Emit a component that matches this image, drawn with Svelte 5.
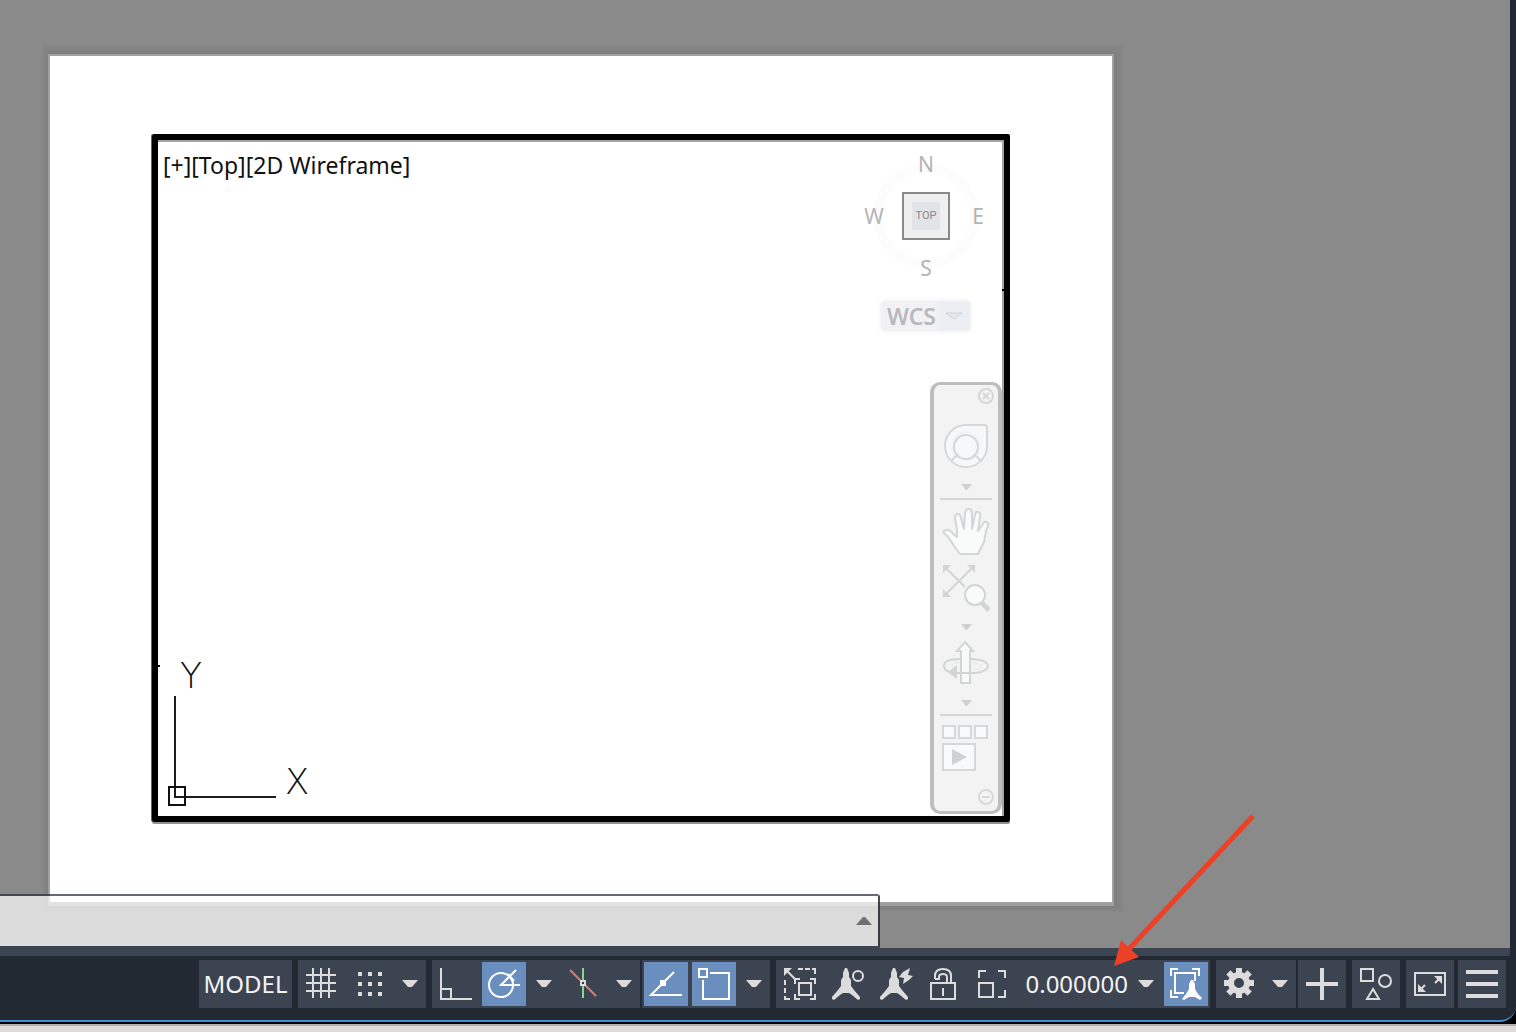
<script lang="ts">
    const annoBody = '21,8 23,8 25,13 25,17 27,20 27,26 30,30 36,37 36,39 34,40 28,35 25,33 19,33 16,35 10,40 8,39 8,37 14,30 17,26 17,20 19,17 19,13';
    const teeth = [0, 45, 90, 135, 180, 225, 270, 315];

    let command = $state('');
    let active = $state({ polar: true, track: true, osnap: true, annotation: true });

    function toggle(key: keyof typeof active) {
        active[key] = !active[key];
    }
</script>

{#snippet more(label: string)}
    <button class="more" aria-label={label}>
        <svg width="32" height="48" viewBox="0 0 32 48"><polygon points="8,20 24,20 18,27 14,27" fill="#dcdcdc" /></svg>
    </button>
{/snippet}

{#snippet navMore(label: string)}
    <button class="nav-more" aria-label={label}>
        <svg width="12" height="6" viewBox="0 0 12 6"><polygon points="1,0 12,0 7,6 6,6" fill="#cfd0d1" /></svg>
    </button>
{/snippet}

<div class="screen">
    <div class="window">
        <main class="canvas">
            <section class="sheet">
                <div class="viewport">
                    <button class="view-label">[+][Top][2D Wireframe]</button>

                    <div class="compass">
                        <svg class="ring" width="106" height="106" viewBox="0 0 106 106">
                            <circle cx="53" cy="53" r="48" fill="none" stroke="#fcfcfc" stroke-width="9" />
                        </svg>
                        <button class="north">N</button>
                        <button class="west">W</button>
                        <button class="cube"><span>TOP</span></button>
                        <button class="east">E</button>
                        <button class="south">S</button>
                    </div>

                    <button class="wcs">
                        WCS
                        <svg width="20" height="10" viewBox="0 0 20 10"><path d="M2 2H18L10 8Z" fill="#e6e8ec" stroke="#d0d2d6" stroke-width="1" /></svg>
                    </button>

                    <nav class="navbar">
                        <button class="nav-end" aria-label="Close">
                            <svg width="16" height="16" viewBox="0 0 16 16" fill="none" stroke="#d6d6d6" stroke-width="2">
                                <circle cx="8" cy="8" r="7" />
                                <path d="M5 5L11 11M11 5L5 11" />
                            </svg>
                        </button>
                        <button class="nav-tool wheel" aria-label="Steering wheel">
                            <svg width="48" height="48" viewBox="0 0 48 48" fill="#f7f8f9" stroke="#d6d7d8" stroke-width="2">
                                <path d="M24 3H42Q45 3 45 6V24A21 21 0 1 1 24 3Z" />
                                <circle cx="24" cy="24" r="15" fill="#f3f4f5" stroke="none" />
                                <circle cx="24" cy="25" r="12" />
                                <path d="M15 33L9 39M33 33L39 39" />
                            </svg>
                        </button>
                        {@render navMore('Wheel options')}
                        <hr />
                        <button class="nav-tool" aria-label="Pan">
                            <svg width="48" height="48" viewBox="0 0 48 48">
                                <path
                                    d="M18 46L12 38L7 30L2 25Q1 22 5 22Q9 22 11 26L15 29V22L13 10Q13 6 16 6Q18 6 19 10L22 21L23 5Q24 1 27 1Q30 1 30 6V21L33 7Q34 3 36 4Q39 4 38 9L36 23L41 16Q43 12 46 15Q47 17 44 23L42 34L36 46Z"
                                    fill="#f9fafa" stroke="#d3d5d6" stroke-width="2" stroke-linejoin="round" />
                            </svg>
                        </button>
                        <button class="nav-tool zoom" aria-label="Zoom extents">
                            <svg width="48" height="48" viewBox="0 0 48 48" fill="none" stroke="#d3d4d5" stroke-width="2">
                                <path d="M3 3L19 19M31 3L3 31M15 15L23 23" />
                                <path d="M1 1H9L1 9ZM33 1V9L25 1ZM1 33V25L9 33Z" fill="#d3d4d5" stroke="none" />
                                <path d="M40 39L47 46" stroke-width="5" />
                                <circle cx="33" cy="31" r="10" fill="#f9fafa" />
                            </svg>
                        </button>
                        {@render navMore('Zoom options')}
                        <button class="nav-tool orbit" aria-label="Orbit">
                            <svg width="48" height="48" viewBox="0 0 48 48" fill="none" stroke="#d3d4d5" stroke-width="2">
                                <path d="M8 32Q2 30 2 26Q2 19 18 19M29 19Q46 20 46 26Q46 31 34 33H14" />
                                <path d="M14 28Q6 26 14 23L18 22M29 22Q40 24 40 27Q40 29 30 30" stroke="#e6e7e8" stroke-width="1" />
                                <path d="M19 43V11H15L23 2L31 11H28V43Z" fill="#f8f9f9" />
                                <path d="M14 33H34" />
                                <path d="M6 32L15 25V39Z" fill="#d3d4d5" stroke="none" />
                            </svg>
                        </button>
                        {@render navMore('Orbit options')}
                        <hr />
                        <button class="nav-tool" aria-label="Show motion">
                            <svg width="48" height="48" viewBox="0 0 48 48" fill="#f8f9fa" stroke="#d6d7d8" stroke-width="2">
                                <rect x="1" y="2" width="12" height="12" />
                                <rect x="17" y="2" width="12" height="12" />
                                <rect x="33" y="2" width="12" height="12" />
                                <rect x="1" y="20" width="32" height="26" />
                                <path d="M10 25L25 33L10 41Z" fill="#cfd1d2" stroke="none" />
                            </svg>
                        </button>
                        <button class="nav-end bottom" aria-label="Customize">
                            <svg width="16" height="16" viewBox="0 0 16 16" fill="none" stroke="#d9d9d9" stroke-width="2">
                                <circle cx="8" cy="8" r="7" />
                                <path d="M4 8H12" />
                            </svg>
                        </button>
                    </nav>

                    <svg class="ucs" width="156" height="156" viewBox="0 0 156 156" fill="none" stroke="#111" stroke-width="2">
                        <path d="M13 44V145H114" stroke="#1c1c1c" />
                        <rect x="7" y="135" width="16" height="18" />
                        <text class="axis" x="29" y="36" text-anchor="middle">Y</text>
                        <text class="axis" x="135" y="142" text-anchor="middle">X</text>
                    </svg>
                </div>
            </section>

            <form class="command">
                <input aria-label="Command" bind:value={command} />
                <button type="button" aria-label="Command history">
                    <svg width="16" height="8" viewBox="0 0 16 8"><polygon points="0,8 16,8 9,0 7,0" fill="#707070" /></svg>
                </button>
            </form>
        </main>

        <footer class="status">
            <div class="group"><button class="label">MODEL</button></div>

            <div class="group">
                <button aria-label="Grid">
                    <svg viewBox="0 0 48 48"><path d="M15 8V38M23 8V38M31 8V38M8 15H38M8 23H38M8 31H38" /></svg>
                </button>
                <button aria-label="Snap">
                    <svg viewBox="0 0 48 48"><path d="M12 14H36M12 24H36M12 34H36" stroke-width="4" stroke-dasharray="4 6" /></svg>
                </button>
                {@render more('Snap settings')}
            </div>

            <div class="cluster">
                <div class="group">
                    <button aria-label="Ortho">
                        <svg viewBox="0 0 48 48"><path d="M9 8V39H40M9 29H19V39" /></svg>
                    </button>
                    <button class="toggle" class:on={active.polar} aria-label="Polar tracking" onclick={() => toggle('polar')}>
                        <svg viewBox="0 0 48 48">
                            <circle cx="21" cy="25" r="12" />
                            <path d="M40 25H21L36 10M28 14L34 21" />
                        </svg>
                    </button>
                    {@render more('Polar settings')}
                    <button aria-label="Isometric drafting">
                        <svg viewBox="0 0 48 48">
                            <path d="M10 10L36 36" stroke="#e07a78" />
                            <path d="M23 8V38" stroke="#86d58e" />
                            <rect x="21" y="21" width="4" height="4" fill="#333a44" />
                        </svg>
                    </button>
                    {@render more('Isoplanes')}
                </div>
                <div class="group">
                    <button class="toggle" class:on={active.track} aria-label="Snap tracking" onclick={() => toggle('track')}>
                        <svg viewBox="0 0 48 48">
                            <path d="M32 12L9 35H40" />
                            <rect x="18" y="20" width="6" height="6" fill="#fff" stroke="none" />
                        </svg>
                    </button>
                    <button class="toggle" class:on={active.osnap} aria-label="Object snap" onclick={() => toggle('osnap')}>
                        <svg viewBox="0 0 48 48">
                            <rect x="9" y="9" width="8" height="8" />
                            <path d="M20 13H39V39H13V20" />
                        </svg>
                    </button>
                    {@render more('Object snap settings')}
                </div>
            </div>

            <div class="group">
                <button aria-label="Selection cycling">
                    <svg viewBox="0 0 48 48">
                        <path d="M22 9H27M29 9H34M36 9H39V14M9 20V25M9 28V33M9 36V39H14M10 10L19 19" />
                        <polygon points="8,8 16,8 8,16" fill="#dcdcdc" stroke="none" />
                        <path d="M19 24V19H24M34 19H39V24M39 34V39H34M24 39H19V34" />
                        <rect x="23" y="23" width="12" height="12" />
                    </svg>
                </button>
                <button aria-label="Annotation visibility">
                    <svg viewBox="0 0 48 48">
                        <polygon points={annoBody} fill="#dcdcdc" stroke="none" />
                        <circle cx="34" cy="16" r="5" />
                    </svg>
                </button>
                <button aria-label="Add scales automatically">
                    <svg viewBox="0 0 48 48">
                        <polygon points={annoBody} fill="#dcdcdc" stroke="none" />
                        <path d="M38 8L31 12L27 17L32 18L31 24L37 20L41 16L36 15Z" fill="#dcdcdc" stroke="none" />
                    </svg>
                </button>
                <button aria-label="Viewport lock">
                    <svg viewBox="0 0 48 48">
                        <rect x="11" y="23" width="24" height="16" />
                        <path d="M23 28V36M15 19V16Q15 9 23 9Q31 9 31 16V22M15 19H19V17Q19 14 23 14Q27 14 27 17V22" />
                    </svg>
                </button>
                <button aria-label="Viewport scale sync">
                    <svg viewBox="0 0 48 48">
                        <rect x="11" y="23" width="14" height="14" />
                        <path d="M11 18V11H18M30 11H37V18M37 30V37H30" />
                    </svg>
                </button>
                <button class="label scale">0.000000</button>
                {@render more('Viewport scales')}
                <button class="toggle" class:on={active.annotation} aria-label="Annotation scale" onclick={() => toggle('annotation')}>
                    <svg viewBox="0 0 48 48">
                        <path d="M9 16V9H16M30 9H37V16M9 30V37H16M22 33H13V13H33V21" />
                        <polygon points="29,20 31,20 33,24 33,29 36,34 40,38 38,40 33,37 27,37 22,40 20,39 24,34 27,29 27,24" fill="#fff" stroke="none" />
                    </svg>
                </button>
            </div>

            <div class="cluster">
                <div class="group">
                    <button aria-label="Workspace">
                        <svg viewBox="0 0 48 48">
                            <circle cx="23" cy="23" r="8" stroke-width="6" />
                            {#each teeth as angle}
                                <rect x="20" y="8" width="6" height="6" fill="#dcdcdc" stroke="none" transform="rotate({angle} 23 23)" />
                            {/each}
                        </svg>
                    </button>
                    {@render more('Workspaces')}
                </div>
                <div class="group">
                    <button aria-label="Annotation monitor">
                        <svg viewBox="0 0 48 48"><path d="M24 8V40M8 24H40" stroke-width="4" /></svg>
                    </button>
                </div>
            </div>

            <div class="group">
                <button aria-label="Isolate objects">
                    <svg viewBox="0 0 48 48">
                        <rect x="9" y="9" width="12" height="12" />
                        <circle cx="33" cy="21" r="6" />
                        <path d="M21 29L15 39H27Z" />
                    </svg>
                </button>
            </div>

            <div class="cluster wide">
                <div class="group">
                    <button aria-label="Clean screen">
                        <svg viewBox="0 0 48 48">
                            <rect x="9" y="13" width="30" height="22" />
                            <path d="M29 23L34 18M19 25L14 30" />
                            <path d="M28 16H36V24ZM12 24V32H20Z" fill="#dcdcdc" stroke="none" />
                        </svg>
                    </button>
                </div>
                <div class="group">
                    <button aria-label="Customization">
                        <svg viewBox="0 0 48 48"><path d="M8 12H40M8 24H40M8 36H40" stroke-width="4" /></svg>
                    </button>
                </div>
            </div>
        </footer>
    </div>
    <div class="desktop"></div>

    <svg class="pointer" width="144" height="154" viewBox="0 0 144 154">
        <path d="M141 3L16 137" stroke="#ec4127" stroke-width="5" />
        <polygon points="2,153 9,127 27,144" fill="#ec4127" />
    </svg>
</div>

<style>
    :global(body) { margin: 0; }

    .screen {
        position: relative;
        display: flex;
        flex-direction: column;
        min-height: 100vh;
        background: #000;
        font-family: "Noto Sans", sans-serif;
    }
    button {
        padding: 0;
        border: none;
        background: none;
        font: inherit;
        color: inherit;
        cursor: pointer;
    }
    svg { display: block; }

    .window {
        flex: 1;
        display: flex;
        flex-direction: column;
        background: #222933;
        border-bottom: 2px solid #3d8fd1;
        border-bottom-right-radius: 16px;
    }
    .desktop {
        height: 6px;
        margin-top: 2px;
        border-top: 2px solid #b2b1b0;
        background: #dcdbda;
    }

    /* drawing area */
    .canvas {
        position: relative;
        flex: 1;
        display: flex;
        box-sizing: border-box;
        margin-right: 6px;
        padding: 54px 396px 42px 48px;
        background: #8a8a8a;
        border-bottom: 8px solid #3d4451;
    }
    .sheet {
        flex: 1;
        display: flex;
        padding: 78px 102px 80px;
        background: #fff;
        border: 2px solid #a0a0a0;
        border-bottom-width: 4px;
        box-shadow: 2px -2px 2px 7px rgba(0, 0, 0, 0.04), 1px 0 4px 2px rgba(0, 0, 0, 0.05);
    }
    .viewport {
        position: relative;
        flex: 1;
        border: 6px solid #000;
        border-radius: 2px;
        box-shadow: inset -2px 2px 0 #a3a3a3, 0 2px 0 #939393, -1px 0 0 #666;
    }
    .viewport::before,
    .viewport::after {
        content: "";
        position: absolute;
        width: 2px;
        height: 2px;
        background: #000;
    }
    .viewport::before { left: 0; bottom: 22%; }
    .viewport::after { right: 0; top: 22%; }
    .view-label {
        margin: 9px 5px;
        font-size: 23px;
        line-height: 32px;
        color: #111;
    }
    .ucs {
        position: absolute;
        left: 4px;
        bottom: 8px;
    }
    .axis {
        font-family: "DejaVu Sans Light", "DejaVu Sans", sans-serif;
        font-size: 36px;
        font-weight: 200;
        fill: #111;
        stroke: none;
    }

    .compass {
        position: absolute;
        top: 10px;
        right: 12px;
        display: grid;
        grid-template: 28px 76px 28px / 28px 76px 28px;
        place-items: center;
        font-size: 21px;
        line-height: 24px;
        color: #b4b4b4;
    }
    .ring {
        position: absolute;
        top: 13px;
        left: 13px;
    }
    .north, .cube, .south { grid-column: 2; }
    .north, .cube, .east, .west, .south { position: relative; }
    .west { grid-column: 1; }
    .north { grid-row: 1; }
    .west, .cube, .east { grid-row: 2; }
    .east { grid-column: 3; }
    .south { grid-row: 3; }
    .cube {
        width: 48px;
        height: 48px;
        padding: 8px;
        border: 2px solid #8a8a8a;
        background: #efefef;
        font-family: Roboto, sans-serif;
        font-size: 11px;
        line-height: 28px;
        color: #858a90;
    }
    .cube span {
        display: flex;
        justify-content: center;
        background: #e1e5e9;
    }
    .wcs {
        position: absolute;
        top: 161px;
        right: 34px;
        display: flex;
        align-items: center;
        gap: 8px;
        padding: 0 6px;
        border-radius: 4px;
        background: linear-gradient(90deg, #f2f2f5 60%, #ebeef2 66%);
        box-shadow: 0 0 4px 1px #f2f2f5;
        font-size: 23px;
        font-weight: 600;
        line-height: 30px;
        color: #b9b9be;
    }

    .navbar {
        position: absolute;
        top: 242px;
        right: 2px;
        bottom: 2px;
        box-sizing: border-box;
        width: 72px;
        display: flex;
        flex-direction: column;
        align-items: center;
        padding: 3px 4px 6px;
        border: 4px solid #bdbdbd;
        border-top-width: 3px;
        border-bottom-width: 3px;
        border-radius: 10px;
        background: #f3f3f3;
    }
    .navbar hr {
        flex: none;
        width: 52px;
        height: 2px;
        margin: 8px 0;
        border: none;
        background: #d6d6d6;
    }
    .nav-end { align-self: flex-end; }
    .nav-end.bottom { margin-top: auto; }
    .nav-tool.wheel { margin: 18px 0 2px; }
    .nav-tool.zoom { margin-top: 8px; }
    .nav-tool.orbit { margin-top: 10px; }
    .nav-more { margin-top: 12px; }

    .command {
        position: absolute;
        left: 0;
        bottom: 0;
        box-sizing: border-box;
        width: calc(100% - 630px);
        height: 54px;
        display: flex;
        align-items: center;
        padding-right: 6px;
        border-top: 2px solid rgba(40, 47, 57, 0.72);
        border-right: 2px solid rgba(40, 47, 57, 0.85);
        border-bottom: 2px solid #3d4451;
        border-top-right-radius: 3px;
        background: rgba(255, 255, 255, 0.7);
        background-clip: padding-box;
    }
    .command input {
        flex: 1;
        border: none;
        outline: none;
        background: none;
        font: 24px "Noto Sans", sans-serif;
    }

    /* status bar */
    .status {
        display: flex;
        justify-content: flex-end;
        gap: 6px;
        padding: 4px 10px 12px;
        color: #f4f4f4;
    }
    .cluster { display: flex; gap: 2px; }
    .cluster.wide { gap: 4px; }
    .group {
        display: flex;
        height: 48px;
        background: #3d4451;
    }
    .group svg {
        height: 48px;
        fill: none;
        stroke: #dcdcdc;
        stroke-width: 2px;
    }
    .group button { width: 48px; }
    .group .more { width: 32px; }
    .group .more svg { stroke: none; }
    .group .toggle.on {
        background: #6a8fbf;
        background-clip: padding-box;
        border: 2px solid transparent;
    }
    .toggle.on svg {
        margin: -2px;
        width: 48px;
        stroke: #fff;
    }
    .group .label {
        width: auto;
        padding: 0 5px;
        font-size: 24px;
        line-height: 48px;
    }
    .group .scale { padding: 0 2px 0 9px; }

    .pointer {
        position: absolute;
        right: 260px;
        bottom: 65px;
    }
</style>
